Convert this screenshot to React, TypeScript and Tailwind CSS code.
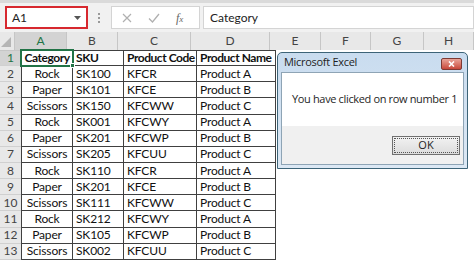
import React from 'react';

const cols = [
  { key: 'A', w: 'w-[52px]' },
  { key: 'B', w: 'w-[51px]' },
  { key: 'C', w: 'w-[73px]' },
  { key: 'D', w: 'w-[79px]' },
  { key: 'E', w: 'w-[51px]' },
  { key: 'F', w: 'w-[50px]' },
  { key: 'G', w: 'w-[53px]' },
  { key: 'H', w: 'w-[50px]' },
];

const rows = [
  ['Category', 'SKU', 'Product Code', 'Product Name'],
  ['Rock', 'SK100', 'KFCR', 'Product A'],
  ['Paper', 'SK101', 'KFCE', 'Product B'],
  ['Scissors', 'SK150', 'KFCWW', 'Product C'],
  ['Rock', 'SK001', 'KFCWY', 'Product A'],
  ['Paper', 'SK201', 'KFCWP', 'Product B'],
  ['Scissors', 'SK205', 'KFCUU', 'Product C'],
  ['Rock', 'SK110', 'KFCR', 'Product A'],
  ['Paper', 'SK201', 'KFCE', 'Product B'],
  ['Scissors', 'SK111', 'KFCWW', 'Product C'],
  ['Rock', 'SK212', 'KFCWY', 'Product A'],
  ['Paper', 'SK105', 'KFCWP', 'Product B'],
  ['Scissors', 'SK002', 'KFCUU', 'Product C'],
];

const FormulaBar: React.FC = () => (
  <div className="flex items-center h-[32px] bg-[#f1f1f1] border-t-[3px] border-[#dadada] pl-[5px]">
    <div className="flex items-center justify-between w-[83px] h-[23px] bg-white border-2 border-[#d7282f] px-[5px]">
      <span className="text-[12px] text-[#222]">A1</span>
      <svg width="7" height="4" viewBox="0 0 7 4"><path d="M0 0h7L3.5 4z" fill="#555" /></svg>
    </div>
    <div className="flex flex-col gap-[2px] ml-[10px] mr-[11px]">
      <span className="w-[2px] h-[2px] bg-[#999]" />
      <span className="w-[2px] h-[2px] bg-[#999]" />
      <span className="w-[2px] h-[2px] bg-[#999]" />
    </div>
    <div className="flex items-center w-[89px] h-[23px] bg-white border border-[#d4d4d4] pl-[10px] gap-[16px]">
      <svg width="10" height="10" viewBox="0 0 10 10"><path d="M1 1l8 8M9 1l-8 8" stroke="#b0b0b0" strokeWidth="1.2" /></svg>
      <svg width="12" height="10" viewBox="0 0 12 10"><path d="M1 5.5l3.5 3.5L11 1" stroke="#b0b0b0" strokeWidth="1.3" fill="none" /></svg>
      <span className="text-[12px] italic text-[#666] font-['Liberation_Serif',serif]">f<span className="text-[9px]">x</span></span>
    </div>
    <div className="flex items-center flex-1 h-[23px] bg-white border border-[#d4d4d4] ml-[3px] pl-[6px]">
      <span className="text-[12px] text-[#222]">Category</span>
    </div>
  </div>
);

const ColumnHeaders: React.FC = () => (
  <div className="flex h-[18px] bg-[#e8e8e8]">
    <div className="w-[21px] flex items-end justify-end pr-[3px] pb-[3px] border-r border-[#c6c6c6]">
      <svg width="10" height="10" viewBox="0 0 10 10"><path d="M10 0v10H0z" fill="#b5b5b5" /></svg>
    </div>
    {cols.map((c) => (
      <div
        key={c.key}
        className={`${c.w} shrink-0 flex items-center justify-center text-[12px] border-r border-[#c6c6c6] ${
          c.key === 'A' ? 'bg-[#d3d3d3] text-[#217346]' : 'text-[#444]'
        }`}
      >
        {c.key}
      </div>
    ))}
  </div>
);

const Dialog: React.FC = () => (
  <div className="absolute left-[277px] top-[52px] w-[191px] h-[117px] rounded-t-[5px] border border-[#3d6478] bg-gradient-to-b from-[#c9dcef] to-[#dce8f4] flex flex-col px-[3px] pb-[3px] font-['Open_Sans',sans-serif]">
    <div className="h-[19px] flex items-center justify-between pl-[3px] pr-[2px]">
      <span className="text-[11px] text-[#1e1e1e] tracking-[-0.3px]">Microsoft Excel</span>
      <div className="w-[21px] h-[12px] mt-[2px] rounded-[2px] border border-[#7d3a34] bg-gradient-to-b from-[#e8a398] to-[#c7463a] flex items-center justify-center">
        <svg width="7" height="6" viewBox="0 0 7 6"><path d="M1 0.5l5 5M6 0.5l-5 5" stroke="white" strokeWidth="1.6" /></svg>
      </div>
    </div>
    <div className="flex-1 flex flex-col border border-[#8ea4b5]">
      <div className="h-[53px] bg-white flex items-center pl-[10px]">
        <span className="text-[11px] text-[#1e1e1e] tracking-[-0.35px]">You have clicked on row number 1</span>
      </div>
      <div className="flex-1 bg-[#f0f0f0] flex items-center justify-end pr-[3px]">
        <div className="w-[68px] h-[19px] border border-[#707070] bg-gradient-to-b from-[#f2f2f2] to-[#dcdcdc] p-[1px]">
          <div className="w-full h-full border border-dotted border-[#555] flex items-center justify-center text-[11px] text-[#1e1e1e]">
            OK
          </div>
        </div>
      </div>
    </div>
  </div>
);

const App: React.FC = () => {
  return (
    <div className="relative w-[474px] h-[263px] overflow-hidden bg-white font-['Lato',sans-serif]">
      <FormulaBar />
      <ColumnHeaders />
      <div className="flex flex-col">
        {rows.map((r, i) => (
          <div key={i} className="flex h-[16.15px]">
            <div
              className={`w-[21px] shrink-0 flex items-center justify-center text-[12px] border-b border-[#d0d0d0] ${
                i === 0 ? 'bg-[#d3d3d3] text-[#217346] border-t border-t-[#c6c6c6]' : 'bg-[#e8e8e8] text-[#444]'
              }`}
            >
              {i + 1}
            </div>
            {r.map((cell, j) => (
              <div
                key={j}
                className={`${cols[j].w} shrink-0 flex items-center text-[12px] text-[#111] border-b border-r border-[#404040] whitespace-nowrap ${
                  j === 0 ? 'justify-center border-l' : 'pl-[3px]'
                } ${i === 0 ? 'font-bold tracking-[-0.45px] border-t' : 'tracking-[-0.15px]'} ${
                  i === 0 && j === 0 ? 'relative outline-2 outline-[#217346] -outline-offset-1' : ''
                }`}
              >
                {cell}
                {i === 0 && j === 0 && (
                  <span className="absolute -right-[3px] -bottom-[3px] w-[5px] h-[5px] bg-[#217346] border border-white" />
                )}
              </div>
            ))}
          </div>
        ))}
      </div>
      <Dialog />
    </div>
  );
};

export default App;
